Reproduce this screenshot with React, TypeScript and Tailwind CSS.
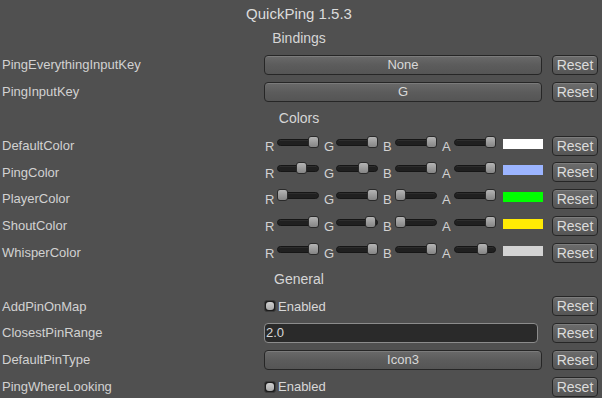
import React from "react"

const font = { fontFamily: '"Liberation Sans", Arial, sans-serif' }

function Header({ title }: { title: string }) {
  return (
    <div className="h-[26.8px] flex items-center justify-center pr-[4px] text-[14px] text-[#d6d6d6]">
      {title}
    </div>
  )
}

function ResetButton() {
  return (
    <button className="w-[46px] h-[20px] shrink-0 rounded-[4px] border border-[#262626] bg-gradient-to-b from-[#6c6c6c] to-[#555555] text-[14px] leading-none text-[#dcdcdc] shadow-[inset_0_1px_0_rgba(255,255,255,0.12)]">
      Reset
    </button>
  )
}

function Row({ label, children }: { label: string; children: React.ReactNode }) {
  return (
    <div className="h-[26.8px] flex items-center">
      <div className="w-[264px] shrink-0 pl-[2px] text-[13px] text-[#d2d2d2]">{label}</div>
      <div className="w-[278px] shrink-0 flex items-center">{children}</div>
      <div className="ml-[10px]">
        <ResetButton />
      </div>
    </div>
  )
}

function WideButton({ text }: { text: string }) {
  return (
    <div className="w-[278px] h-[20px] rounded-[4px] border border-[#262626] bg-gradient-to-b from-[#6a6a6a] via-[#5c5c5c] to-[#555555] flex items-center justify-center text-[13px] text-[#d8d8d8] shadow-[inset_0_1px_0_rgba(255,255,255,0.12)]">
      {text}
    </div>
  )
}

function Slider({ value }: { value: number }) {
  return (
    <div className="relative w-[42px] h-[12px] mb-[8px] shrink-0">
      <div className="absolute left-0 right-0 top-[3px] h-[7px] rounded-full bg-[#202020] border border-[#161616] shadow-[inset_0_1px_0_rgba(255,255,255,0.06)]" />
      <div
        className="absolute top-0 w-[11px] h-[12px] rounded-[3px] border border-[#2a2a2a] bg-gradient-to-b from-[#b4b4b4] to-[#858585]"
        style={{ left: `${value * 31}px` }}
      />
    </div>
  )
}

function ColorControl({ values, swatch }: { values: number[]; swatch: string }) {
  const labels = ["R", "G", "B", "A"]
  return (
    <div className="flex items-center">
      {labels.map((l, i) => (
        <div key={l} className="flex items-center mr-[4px]">
          <span className="w-[13px] pl-[1px] text-[13px] text-[#d2d2d2] mt-[2px]">{l}</span>
          <Slider value={values[i]} />
        </div>
      ))}
      <div className="ml-[3px] w-[40px] h-[10px] mb-[4px]" style={{ backgroundColor: swatch }} />
    </div>
  )
}

function Toggle() {
  return (
    <div className="flex items-center">
      <div className="w-[12px] h-[12px] rounded-[3px] bg-[#1c1c1c] border border-[#3c3c3c] flex items-center justify-center">
        <div className="w-[8px] h-[8px] rounded-[3px] bg-gradient-to-b from-[#d0d0d0] to-[#a8a8a8]" />
      </div>
      <span className="ml-[2px] text-[13px] text-[#d8d8d8]">Enabled</span>
    </div>
  )
}

export default function App() {
  return (
    <div className="w-[602px] h-[398px] overflow-hidden bg-[#505050] pt-[3px]" style={font}>
      <div className="h-[22px] flex items-center justify-center pr-[4px] text-[15px] text-[#dcdcdc]">
        QuickPing 1.5.3
      </div>
      <Header title="Bindings" />
      <Row label="PingEverythingInputKey">
        <WideButton text="None" />
      </Row>
      <Row label="PingInputKey">
        <WideButton text="G" />
      </Row>
      <Header title="Colors" />
      <Row label="DefaultColor">
        <ColorControl values={[1, 1, 1, 1]} swatch="#ffffff" />
      </Row>
      <Row label="PingColor">
        <ColorControl values={[0.6, 0.72, 1, 1]} swatch="#9bb4ff" />
      </Row>
      <Row label="PlayerColor">
        <ColorControl values={[0, 1, 0, 1]} swatch="#00ff00" />
      </Row>
      <Row label="ShoutColor">
        <ColorControl values={[1, 0.92, 0, 1]} swatch="#ffeb04" />
      </Row>
      <Row label="WhisperColor">
        <ColorControl values={[1, 1, 1, 0.75]} swatch="#d3d3d3" />
      </Row>
      <Header title="General" />
      <Row label="AddPinOnMap">
        <Toggle />
      </Row>
      <Row label="ClosestPinRange">
        <div className="w-[274px] h-[20px] rounded-[4px] border border-[#8c8c8c] bg-[#2a2a2a] flex items-center pl-[1px] text-[13px] text-[#d8d8d8]">
          2.0
        </div>
      </Row>
      <Row label="DefaultPinType">
        <WideButton text="Icon3" />
      </Row>
      <Row label="PingWhereLooking">
        <Toggle />
      </Row>
    </div>
  )
}
